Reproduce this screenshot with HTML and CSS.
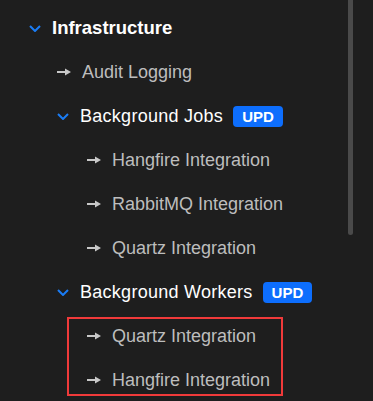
FILE: index.html
```html
<!DOCTYPE html>
<html lang="en">
<head>
  <meta charset="UTF-8">
  <title>Docs menu</title>
  <link rel="stylesheet" href="styles.css">
</head>
<body>

  <nav class="tree">
    <div class="row lvl0 group">
      <svg class="chev" viewBox="0 0 12 7"><polyline points="1,1 6,6 11,1"/></svg>
      <span class="label">Infrastructure</span>
    </div>

    <div class="row lvl1">
      <svg class="arrow" viewBox="0 0 14 8"><path d="M0 3h8v2H0z M8 0.5l6 3.5-6 3.5z"/></svg>
      <span class="label">Audit Logging</span>
    </div>

    <div class="row lvl1 group">
      <svg class="chev" viewBox="0 0 12 7"><polyline points="1,1 6,6 11,1"/></svg>
      <span class="label">Background Jobs</span>
      <span class="badge">UPD</span>
    </div>
    <div class="row lvl2">
      <svg class="arrow" viewBox="0 0 14 8"><path d="M0 3h8v2H0z M8 0.5l6 3.5-6 3.5z"/></svg>
      <span class="label">Hangfire Integration</span>
    </div>
    <div class="row lvl2">
      <svg class="arrow" viewBox="0 0 14 8"><path d="M0 3h8v2H0z M8 0.5l6 3.5-6 3.5z"/></svg>
      <span class="label">RabbitMQ Integration</span>
    </div>
    <div class="row lvl2">
      <svg class="arrow" viewBox="0 0 14 8"><path d="M0 3h8v2H0z M8 0.5l6 3.5-6 3.5z"/></svg>
      <span class="label">Quartz Integration</span>
    </div>

    <div class="row lvl1 group">
      <svg class="chev" viewBox="0 0 12 7"><polyline points="1,1 6,6 11,1"/></svg>
      <span class="label">Background Workers</span>
      <span class="badge">UPD</span>
    </div>
    <!-- highlighted -->
    <div class="marked">
      <div class="row lvl2">
        <svg class="arrow" viewBox="0 0 14 8"><path d="M0 3h8v2H0z M8 0.5l6 3.5-6 3.5z"/></svg>
        <span class="label">Quartz Integration</span>
      </div>
      <div class="row lvl2">
        <svg class="arrow" viewBox="0 0 14 8"><path d="M0 3h8v2H0z M8 0.5l6 3.5-6 3.5z"/></svg>
        <span class="label">Hangfire Integration</span>
      </div>
    </div>
  </nav>

  <div class="scrollbar"></div>

</body>
</html>
```

FILE: styles.css
```css
body {
  margin: 0;
  padding: 0;
  background: #1e1e1e;
  font-family: "Liberation Sans", Arial, sans-serif;
  overflow: hidden;
}

.tree {
  padding-top: 6px;
}

.row {
  display: flex;
  align-items: center;
  height: 44px;
  font-size: 18px;
  color: #bdbdbd;
}

.lvl0 { padding-left: 29px; }
.lvl1 { padding-left: 57px; }
.lvl2 { padding-left: 87px; }

.group {
  color: #ffffff;
}

.lvl1.group .label {
  letter-spacing: 0.27px;
}

.lvl0 .label {
  font-weight: 700;
  font-size: 18.5px;
}

.chev {
  width: 12px;
  height: 7px;
  margin-right: 11px;
  fill: none;
  stroke: #1a7cf5;
  stroke-width: 2;
}

.arrow {
  width: 14px;
  height: 8px;
  margin-right: 11px;
  fill: #c8c8c8;
}

.badge {
  margin-left: 10px;
  background: #0d6efd;
  color: #fff;
  font-weight: 700;
  font-size: 15px;
  line-height: 21px;
  padding: 0 9px;
  border-radius: 4px;
}

.marked {
  position: relative;
}

.marked::before {
  content: "";
  position: absolute;
  left: 67px;
  top: 3px;
  width: 212px;
  height: 75px;
  border: 2px solid #f03a3a;
}

.scrollbar {
  position: absolute;
  top: 0;
  left: 348px;
  width: 5px;
  height: 235px;
  background: #4a4a4a;
  border-radius: 0 0 3px 3px;
}
```
